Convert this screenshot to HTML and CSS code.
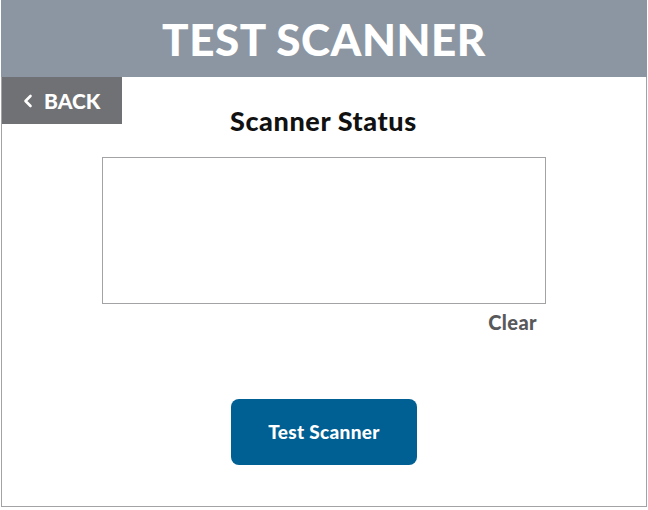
FILE: index.html
```html
<!DOCTYPE html>
<html lang="en">
<head>
  <meta charset="UTF-8" />
  <meta name="viewport" content="width=device-width, initial-scale=1" />
  <title>Test Scanner</title>
  <link rel="stylesheet" href="styles.css">
</head>
<body>
  <div class="page">
    <header class="header">
      <h1>TEST SCANNER</h1>
    </header>

    <div class="top-row">
      <button class="back-btn">
        <svg class="chev" width="10" height="14" viewBox="0 0 10 14"><path d="M7.5 2 L2.5 7 L7.5 12" fill="none" stroke="#fff" stroke-width="2.6" stroke-linecap="round" stroke-linejoin="round"/></svg>
        <span>BACK</span>
      </button>
      <h2 class="status-title">Scanner Status</h2>
    </div>

    <div class="status-wrap">
      <textarea class="status-box" readonly></textarea>
      <div class="clear-row">
        <button class="clear-btn">Clear</button>
      </div>
    </div>

    <div class="action-row">
      <button class="main-btn">Test Scanner</button>
    </div>
  </div>
</body>
</html>
```

FILE: styles.css
```css
body {
  font-family: "Lato", "Open Sans", sans-serif;
  margin: 0;
  padding: 0;
  background: #fff;
}
.page {
  width: 646px;
  height: 507px;
  margin-left: 1px;
  border: 1px solid #a3a3a6;
  border-top: none;
  box-sizing: border-box;
  display: flex;
  flex-direction: column;
}
.header {
  background: #8b96a2;
  height: 77px;
  margin: 0 -1px;
  display: flex;
  align-items: center;
  justify-content: center;
}
.header h1 {
  margin: 0;
  color: #fff;
  font-weight: 900;
  font-size: 44px;
  letter-spacing: 0.5px;
}
.top-row {
  display: flex;
  align-items: flex-start;
  height: 80px;
}
.back-btn {
  width: 120px;
  height: 47px;
  border: none;
  background: #707174;
  color: #fff;
  font-family: inherit;
  font-weight: 900;
  font-size: 21px;
  padding: 0 0 0 21px;
  display: flex;
  align-items: center;
  gap: 11px;
}
.chev {
  display: block;
}
.status-title {
  margin: 27px 0 0 108px;
  font-size: 27px;
  font-weight: 900;
  letter-spacing: 0.6px;
  color: #111;
}
.status-wrap {
  width: 444px;
  margin: 0 auto;
  display: flex;
  flex-direction: column;
}
.status-box {
  width: 444px;
  height: 147px;
  border: 1px solid #a3a3a6;
  box-sizing: border-box;
  resize: none;
  margin: 0;
  outline: none;
}
.clear-row {
  display: flex;
  justify-content: flex-end;
  padding-right: 9px;
  margin-top: 6px;
}
.clear-btn {
  border: none;
  background: none;
  padding: 0;
  font-family: inherit;
  font-weight: 900;
  font-size: 20px;
  letter-spacing: 0.4px;
  color: #58595b;
}
.action-row {
  display: flex;
  justify-content: center;
  margin-top: 65px;
}
.main-btn {
  width: 186px;
  height: 66px;
  border: none;
  border-radius: 8px;
  background: #005f93;
  color: #fff;
  font-family: inherit;
  font-weight: 900;
  font-size: 19px;
  letter-spacing: 0.3px;
  padding-bottom: 3px;
}
```
